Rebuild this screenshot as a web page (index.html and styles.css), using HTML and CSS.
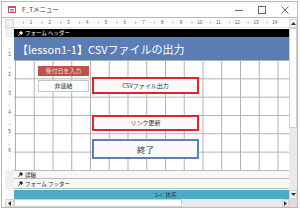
FILE: index.html
```html
<!DOCTYPE html>
<html lang="ja">
<head>
<meta charset="utf-8">
<title>F_Tメニュー</title>
<link rel="stylesheet" href="styles.css">
</head>
<body>
<div class="win">
  <div class="titlebar">
    <svg class="appicon" width="8" height="7" viewBox="0 0 8 7">
      <rect x="0.5" y="0.5" width="7" height="6" fill="#fff" stroke="#c8505c"/>
      <rect x="0.5" y="0.5" width="7" height="1.5" fill="#c8505c"/>
      <line x1="2" y1="3.5" x2="6" y2="3.5" stroke="#6a8cc0"/>
      <line x1="2" y1="5" x2="6" y2="5" stroke="#6a8cc0"/>
    </svg>
    <span class="title">F_Tメニュー</span>
    <div class="controls">
      <svg width="10" height="10" viewBox="0 0 10 10"><line x1="1" y1="5.5" x2="9" y2="5.5" stroke="#666"/></svg>
      <svg width="10" height="10" viewBox="0 0 10 10"><rect x="1.5" y="1.5" width="7" height="7" fill="none" stroke="#666"/></svg>
      <svg width="10" height="10" viewBox="0 0 10 10"><path d="M1.5 1.5 L8.5 8.5 M8.5 1.5 L1.5 8.5" stroke="#666" fill="none"/></svg>
    </div>
  </div>
  <div class="sep"></div>
  <div class="workspace">
    <div class="corner"></div>
    <div class="hruler">
      <span class="rc"><i>·</i><i>·</i><i>ı</i><i>·</i><b>1</b></span>
      <span class="rc"><i>·</i><i>·</i><i>ı</i><i>·</i><b>2</b></span>
      <span class="rc"><i>·</i><i>·</i><i>ı</i><i>·</i><b>3</b></span>
      <span class="rc"><i>·</i><i>·</i><i>ı</i><i>·</i><b>4</b></span>
      <span class="rc"><i>·</i><i>·</i><i>ı</i><i>·</i><b>5</b></span>
      <span class="rc"><i>·</i><i>·</i><i>ı</i><i>·</i><b>6</b></span>
      <span class="rc"><i>·</i><i>·</i><i>ı</i><i>·</i><b>7</b></span>
      <span class="rc"><i>·</i><i>·</i><i>ı</i><i>·</i><b>8</b></span>
      <span class="rc"><i>·</i><i>·</i><i>ı</i><i>·</i><b>9</b></span>
      <span class="rc"><i>·</i><i>·</i><i>ı</i><i>·</i><b>10</b></span>
      <span class="rc"><i>·</i><i>·</i><i>ı</i><i>·</i><b>11</b></span>
      <span class="rc"><i>·</i><i>·</i><i>ı</i><i>·</i><b>12</b></span>
      <span class="rc"><i>·</i><i>·</i><i>ı</i><i>·</i><b>13</b></span>
      <span class="rc"><i>·</i><i>·</i><i>ı</i><i>·</i><b>14</b></span>
      <span class="rc rc-last"><i>·</i><i>·</i></span>
    </div>
    <div class="vsb-up"><svg width="5" height="3" viewBox="0 0 5 3"><path d="M0 3 L2.5 0 L5 3 Z" fill="#333"/></svg></div>
    <div class="vruler">
      <div class="vr-bar"></div>
      <div class="vr-sec">
        <span class="vc"><i>·</i><i>·</i><i>-</i><i>·</i><b>1</b></span>
        <span class="vc"><i>·</i><i>·</i><i>-</i><i>·</i><b>2</b></span>
        <span class="vc"><i>·</i><i>·</i><i>-</i><i>·</i><b>3</b></span>
        <span class="vc"><i>·</i><i>·</i><i>-</i><i>·</i><b>4</b></span>
        <span class="vc"><i>·</i><i>·</i><i>-</i><i>·</i><b>5</b></span>
        <span class="vc"><i>·</i><i>·</i><i>-</i><i>·</i><b>6</b></span>
        <span class="vc vc-last"><i>·</i><i>·</i></span>
      </div>
      <div class="vr-bar2"></div>
      <div class="vr-bar3"></div>
      <div class="vr-foot"><i>·</i></div>
    </div>
    <div class="design">
      <div class="hdrbar"><svg class="pin" width="5" height="5" viewBox="0 0 5 5"><path d="M0 4.5 L2 2.5 L1 1.5 L3 0 L5 2 L3.5 4 L2.5 3 L0.5 5 Z" fill="#fff"/></svg>フォーム ヘッダー</div>
      <div class="banner">【lesson1-1】CSVファイルの出力</div>
      <div class="canvas">
        <div class="ctl label">受付日を入力</div>
        <div class="ctl textbox">非連結</div>
        <div class="ctl btn btn-csv">CSVファイル出力</div>
        <div class="ctl btn btn-link">リンク更新</div>
        <div class="ctl btn btn-exit">終了</div>
      </div>
      <div class="secbar sec-detail"><svg class="pin" width="5" height="5" viewBox="0 0 5 5"><path d="M0 4.5 L2 2.5 L1 1.5 L3 0 L5 2 L3.5 4 L2.5 3 L0.5 5 Z" fill="#222"/></svg>詳細</div>
      <div class="secbar sec-footer"><svg class="pin" width="5" height="5" viewBox="0 0 5 5"><path d="M0 4.5 L2 2.5 L1 1.5 L3 0 L5 2 L3.5 4 L2.5 3 L0.5 5 Z" fill="#222"/></svg>フォーム フッター</div>
      <div class="footer"><span class="foot-text">ｺｰﾄﾞ体系</span></div>
    </div>
    <div class="vsb">
      <div class="vsb-thumb"></div>
      <div class="vsb-track"></div>
      <div class="vsb-down"><svg width="5" height="3" viewBox="0 0 5 3"><path d="M0 0 L2.5 3 L5 0 Z" fill="#333"/></svg></div>
    </div>
    <div class="hsb">
      <div class="hsb-left"><svg width="3" height="5" viewBox="0 0 3 5"><path d="M3 0 L0 2.5 L3 5 Z" fill="#333"/></svg></div>
      <div class="hsb-thumb"></div>
      <div class="hsb-track"></div>
      <div class="hsb-right"><svg width="3" height="5" viewBox="0 0 3 5"><path d="M0 0 L3 2.5 L0 5 Z" fill="#333"/></svg></div>
    </div>
    <div class="sizebox"></div>
  </div>
</div>
</body>
</html>
```

FILE: styles.css
```css
* { box-sizing: border-box; }
html, body { margin: 0; padding: 0; background: #fff; }
body {
  width: 300px;
  height: 209px;
  overflow: hidden;
  font-family: "Noto Sans CJK JP", "Noto Sans", sans-serif;
  color: #222;
}
.win {
  margin: 1px 0 0 1px;
  width: 297px;
  height: 207px;
  border: 1px solid #dba9ae;
  background: #fff;
  display: flex;
  flex-direction: column;
}
.titlebar {
  height: 15px;
  display: flex;
  align-items: center;
  padding-left: 6px;
  background: #fff;
}
.appicon { display: block; flex: none; }
.title {
  margin-left: 6px;
  font-size: 6.5px;
  color: #333;
  line-height: 1;
}
.controls {
  margin-left: auto;
  display: flex;
  gap: 13px;
  padding-right: 7px;
}
.controls svg { display: block; }
.sep { height: 1px; background: #dba9ae; }

.workspace {
  margin-top: 1px;
  display: grid;
  grid-template-columns: 3px 9px 275px 8px;
  grid-template-rows: 9px 171px 8px;
  background: #fff;
}
.corner {
  grid-column: 2; grid-row: 1;
  background: #f2f2f2;
  border: 1px solid #d8d8d8;
}
.hruler {
  grid-column: 3; grid-row: 1;
  display: flex;
  overflow: hidden;
  background: #fff;
  border-bottom: 1px solid #e6e6e6;
  font-family: "Liberation Sans", sans-serif;
  font-size: 4.5px;
  color: #555;
}
.rc {
  flex: none;
  width: 18.75px;
  display: flex;
  align-items: center;
  justify-content: space-evenly;
  line-height: 8px;
}
.rc-last { flex: 1; width: auto; justify-content: space-around; padding-right: 4px; }
.rc i { font-style: normal; }
.rc b { font-weight: normal; width: 0; display: flex; justify-content: center; margin-left: 2px; }
.vsb-up {
  grid-column: 4; grid-row: 1;
  display: flex; align-items: center; justify-content: center;
  background: #f0f0f0;
  border: 1px solid #d4d4d4;
}
.vruler {
  grid-column: 2; grid-row: 2;
  display: flex;
  flex-direction: column;
  font-family: "Liberation Sans", sans-serif;
  font-size: 4.5px;
  color: #555;
}
.vr-bar { height: 9px; background: #f0f0f0; }
.vr-sec {
  height: 133px;
  display: flex;
  flex-direction: column;
  overflow: hidden;
}
.vc {
  flex: none;
  height: 19.2px;
  display: flex;
  flex-direction: column;
  align-items: center;
  justify-content: space-evenly;
  line-height: 3px;
}
.vc-last { flex: 1; height: auto; }
.vc i { font-style: normal; }
.vc b { font-weight: normal; height: 0; display: flex; align-items: center; }
.vr-bar2 { height: 9px; background: #f0f0f0; }
.vr-bar3 { height: 10px; background: #f0f0f0; }
.vr-foot { flex: 1; display: flex; justify-content: center; align-items: center; }
.vr-foot i { font-style: normal; }

.design {
  grid-column: 3; grid-row: 2;
  display: flex;
  flex-direction: column;
  background: #fff;
}
.hdrbar {
  margin-top: 1px;
  height: 8px;
  background: #000;
  color: #fff;
  font-size: 5.5px;
  line-height: 8px;
  display: flex;
  align-items: center;
  padding-left: 4px;
  white-space: nowrap;
}
.pin { display: block; margin-right: 2px; flex: none; }
.banner {
  height: 23px;
  background: #5a7db3;
  color: #fff;
  font-size: 11px;
  font-weight: 400;
  display: flex;
  align-items: center;
  padding-left: 3px;
  padding-top: 1px;
  white-space: nowrap;
}
.canvas {
  position: relative;
  height: 110px;
  background-color: #fff;
  background-image:
    linear-gradient(to right, #b0b0b0 1px, transparent 1px),
    linear-gradient(to bottom, #b0b0b0 1px, transparent 1px);
  background-size: 18.75px 18.33px;
  background-position: 1px 0;
}
.ctl {
  position: absolute;
  display: flex;
  align-items: center;
  justify-content: center;
  font-size: 6px;
  white-space: nowrap;
  line-height: 1;
}
.label {
  left: 24px; top: 6px; width: 51px; height: 10px;
  background: #c0504d;
  color: #f4dede;
}
.textbox {
  left: 24px; top: 20px; width: 51px; height: 12px;
  background: #fff;
  border: 1px solid #c8c8c8;
  color: #333;
}
.btn {
  left: 78px; width: 107px;
  background: #fafafa;
  color: #333;
}
.btn-csv { top: 17px; height: 17px; border: 2px solid #e1232b; }
.btn-link { top: 55px; height: 16px; border: 2px solid #e1232b; }
.btn-exit { top: 79px; height: 20px; border: 2px solid #5f80b6; font-size: 8.5px; }

.secbar {
  display: flex;
  align-items: center;
  padding-left: 4px;
  font-size: 5.5px;
  color: #222;
  background: #f7f7f7;
  border-bottom: 1px solid #bdbdbd;
  white-space: nowrap;
}
.sec-detail { height: 9px; border-top: 1px solid #bdbdbd; }
.sec-footer { height: 10px; }
.footer {
  margin-top: 1px;
  height: 9px;
  background: #4bacc6;
  display: flex;
  align-items: center;
  justify-content: center;
  font-size: 5.5px;
  color: #1e3a46;
}
.foot-text { margin-left: 28px; }

.vsb {
  grid-column: 4; grid-row: 2;
  display: flex;
  flex-direction: column;
  background: #e9e9e9;
}
.vsb-thumb { height: 100px; background: #fff; border: 1px solid #cfcfcf; }
.vsb-track { flex: 1; }
.vsb-down {
  height: 9px;
  display: flex; align-items: center; justify-content: center;
  background: #f0f0f0;
  border: 1px solid #d4d4d4;
}
.hsb {
  grid-column: 2 / 4; grid-row: 3;
  display: flex;
  background: #e9e9e9;
}
.hsb-left, .hsb-right {
  display: flex; align-items: center; justify-content: center;
  background: #f0f0f0;
  border: 1px solid #d4d4d4;
}
.hsb-left { width: 9px; }
.hsb-thumb { width: 168px; background: #fff; border: 1px solid #cfcfcf; }
.hsb-track { flex: 1; }
.hsb-right { width: 7px; }
.sizebox { grid-column: 4; grid-row: 3; background: #dcdcdc; }
```
